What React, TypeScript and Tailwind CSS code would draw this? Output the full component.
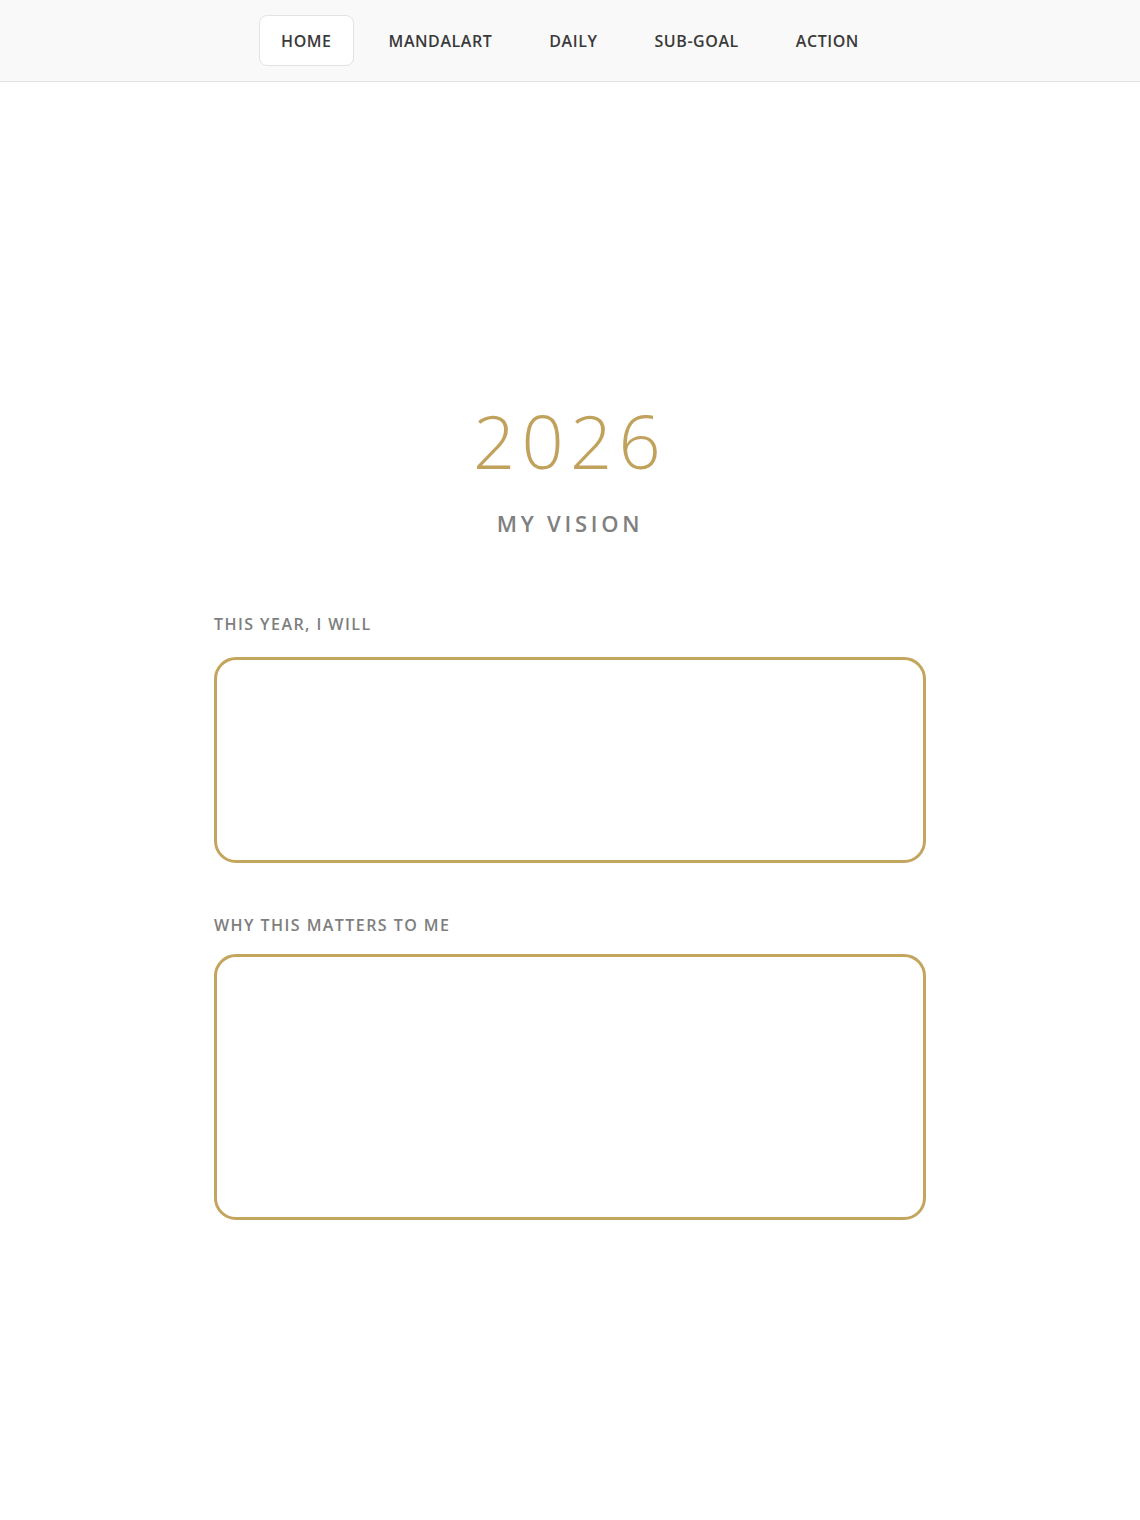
import React, { useState } from "react";

const navItems = ["HOME", "MANDALART", "DAILY", "SUB-GOAL", "ACTION"];

const App = () => {
  const [active, setActive] = useState("HOME");
  const [goal, setGoal] = useState("");
  const [why, setWhy] = useState("");

  return (
    <div className="min-h-[1520px] bg-white font-['Open_Sans',sans-serif]">
      <nav className="h-[82px] bg-[#f9f9f9] border-b border-[#e2e2e2] flex items-center justify-center gap-[13px]">
        {navItems.map((item) => (
          <button
            key={item}
            onClick={() => setActive(item)}
            className={`h-[51px] px-[21px] rounded-[8px] text-[16px] leading-none font-semibold tracking-[0.035em] text-[#3a3a3a] border ${
              active === item
                ? "bg-white border-[#e3e3e3]"
                : "bg-transparent border-transparent"
            }`}
          >
            {item}
          </button>
        ))}
      </nav>

      <main className="pt-[322px] pb-20">
        <h1 className="text-center text-[74px] leading-[74px] font-light tracking-[0.085em] text-[#c1a25d]">
          2026
        </h1>
        <h2 className="mt-[34px] text-center text-[22px] leading-[22px] font-semibold tracking-[0.17em] text-[#808080]">
          MY VISION
        </h2>

        <div className="w-[712px] mx-auto mt-[82px]">
          <label className="block text-[16px] leading-[16px] font-semibold tracking-[0.09em] text-[#7e7e7e]">
            THIS YEAR, I WILL
          </label>
          <textarea
            value={goal}
            onChange={(e) => setGoal(e.target.value)}
            className="block w-full h-[206px] mt-[25px] border-[3px] border-[#c4a55d] rounded-[22px] resize-none outline-none p-5 text-[#333]"
          />

          <label className="block mt-[54px] text-[16px] leading-[16px] font-semibold tracking-[0.09em] text-[#7e7e7e]">
            WHY THIS MATTERS TO ME
          </label>
          <textarea
            value={why}
            onChange={(e) => setWhy(e.target.value)}
            className="block w-full h-[266px] mt-[21px] border-[3px] border-[#c4a55d] rounded-[22px] resize-none outline-none p-5 text-[#333]"
          />
        </div>
      </main>
    </div>
  );
};

export default App;
